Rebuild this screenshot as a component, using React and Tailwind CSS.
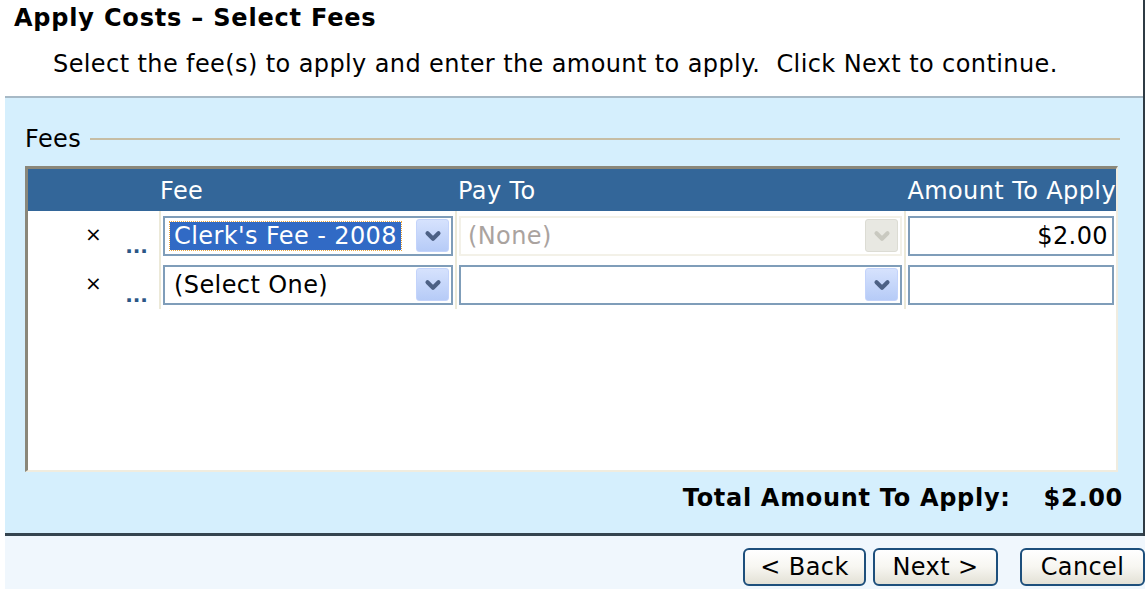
import { ChevronDown } from 'lucide-react';

function DropBtn({ disabled }) {
  return (
    <div
      className={
        disabled
          ? 'w-[33px] h-[33px] shrink-0 rounded-[3px] bg-[#e8e8e2] border border-[#dcdcd4] flex items-center justify-center'
          : 'w-[33px] h-[33px] shrink-0 rounded-[3px] bg-gradient-to-b from-[#d6e2fd] to-[#b6cbf7] border border-[#c3d3fb] flex items-center justify-center'
      }
    >
      <ChevronDown size={22} strokeWidth={4.5} className={disabled ? 'text-[#c9c9c0]' : 'text-[#4d6185]'} />
    </div>
  );
}

function Select({ children, disabled, selected }) {
  return (
    <div
      className={
        'h-[40px] flex items-center pl-[5px] pr-[2px] bg-white border-2 ' +
        (disabled ? 'border-[#f3f1e8]' : 'border-[#7f9db9]')
      }
    >
      <div className="flex-1 min-w-0 whitespace-nowrap">
        {selected ? (
          <span className="inline-block bg-[#316ac5] text-white px-[4px] leading-[28px] outline-1 outline-dotted outline-[#e8a33c]">
            {children}
          </span>
        ) : (
          <span className={disabled ? 'pl-[2px] text-[#aaa39f]' : 'pl-[4px] text-black'}>{children}</span>
        )}
      </div>
      <DropBtn disabled={disabled} />
    </div>
  );
}

function Row({ fee, payTo, amount, selected, payDisabled }) {
  return (
    <div className="grid grid-cols-[131px_298px_449px_210px] h-[49px] items-center">
      <div className="flex h-full items-start pt-[12px]">
        <span className="ml-[57px] text-[20px] leading-[22px]">×</span>
        <span className="ml-[23px] mt-[12px] text-[20px] leading-[22px] font-bold text-[#2a5686] tracking-[0px]">...</span>
      </div>
      <div className="h-full flex items-center px-[2px] border-x-2 border-[#ece9d8]">
        <div className="w-full">
          <Select selected={selected}>{fee}</Select>
        </div>
      </div>
      <div className="h-full flex items-center px-[2px] border-r-2 border-[#ece9d8]">
        <div className="w-full">
          <Select disabled={payDisabled}>{payTo}</Select>
        </div>
      </div>
      <div className="h-full flex items-center px-[2px]">
        <div className="w-full h-[40px] bg-white border-2 border-[#7f9db9] flex items-center justify-end pr-[4px]">
          {amount}
        </div>
      </div>
    </div>
  );
}

function Btn({ children, className }) {
  return (
    <button
      className={
        'h-[38px] rounded-[6px] border-2 border-[#1d4f7c] bg-gradient-to-b from-white via-[#f7f6f1] to-[#e3e1d6] text-black leading-[30px] ' +
        className
      }
    >
      {children}
    </button>
  );
}

export default function App() {
  return (
    <div className="w-[1148px] h-[589px] bg-white overflow-hidden font-['Tahoma','DejaVu_Sans',sans-serif] text-[24px] tracking-[0.4px] text-black">
      <div className="w-[1145px] border-r-2 border-[#2f3b44]">
        <div className="h-[96px]">
          <h1 className="pl-[14px] pt-[3px] text-[24px] leading-[30px] font-bold tracking-[0.8px]">Apply Costs – Select Fees</h1>
          <p className="pl-[53px] pt-[16px] leading-[30px] whitespace-pre">
            Select the fee(s) to apply and enter the amount to apply.  Click Next to continue.
          </p>
        </div>
        <div className="ml-[5px] h-[440px] bg-[#d5effd] border-t-2 border-[#a7b9c6] border-b-[3px] border-b-[#34444f] pt-[26px] px-[20px]">
          <div className="flex items-center h-[30px]">
            <span className="leading-[28px]">Fees</span>
            <div className="flex-1 ml-[9px] mr-[3px] h-[2px] bg-[#c6bda4]" />
          </div>
          <div className="mt-[12px] w-[1093px] h-[306px] bg-white border-t-[3px] border-l-[3px] border-[#8a877a] border-b-2 border-r-2 border-b-[#f0ecdf] border-r-[#f0ecdf]">
            <div className="grid grid-cols-[131px_298px_449px_210px] h-[42px] bg-[#336699] text-white items-center overflow-hidden whitespace-nowrap pt-[2px]">
              <div />
              <div className="pl-[1px]">Fee</div>
              <div className="pl-[1px]">Pay To</div>
              <div className="flex justify-end">Amount To Apply</div>
            </div>
            <div>
              <Row fee="Clerk's Fee - 2008" payTo="(None)" amount="$2.00" selected payDisabled />
              <Row fee="(Select One)" payTo="" amount="" />
            </div>
          </div>
          <div className="flex justify-end items-center mt-[8px] font-bold tracking-[0.7px]">
            <span>Total Amount To Apply:</span>
            <span className="ml-[33px]">$2.00</span>
          </div>
        </div>
      </div>
      <div className="ml-[5px] w-[1140px] h-[53px] bg-[#f0f7fd] flex justify-end items-start pt-[12px]">
        <Btn className="w-[123px]">&lt; Back</Btn>
        <Btn className="w-[125px] ml-[7px]">Next &gt;</Btn>
        <Btn className="w-[125px] ml-[22px]">Cancel</Btn>
      </div>
    </div>
  );
}
